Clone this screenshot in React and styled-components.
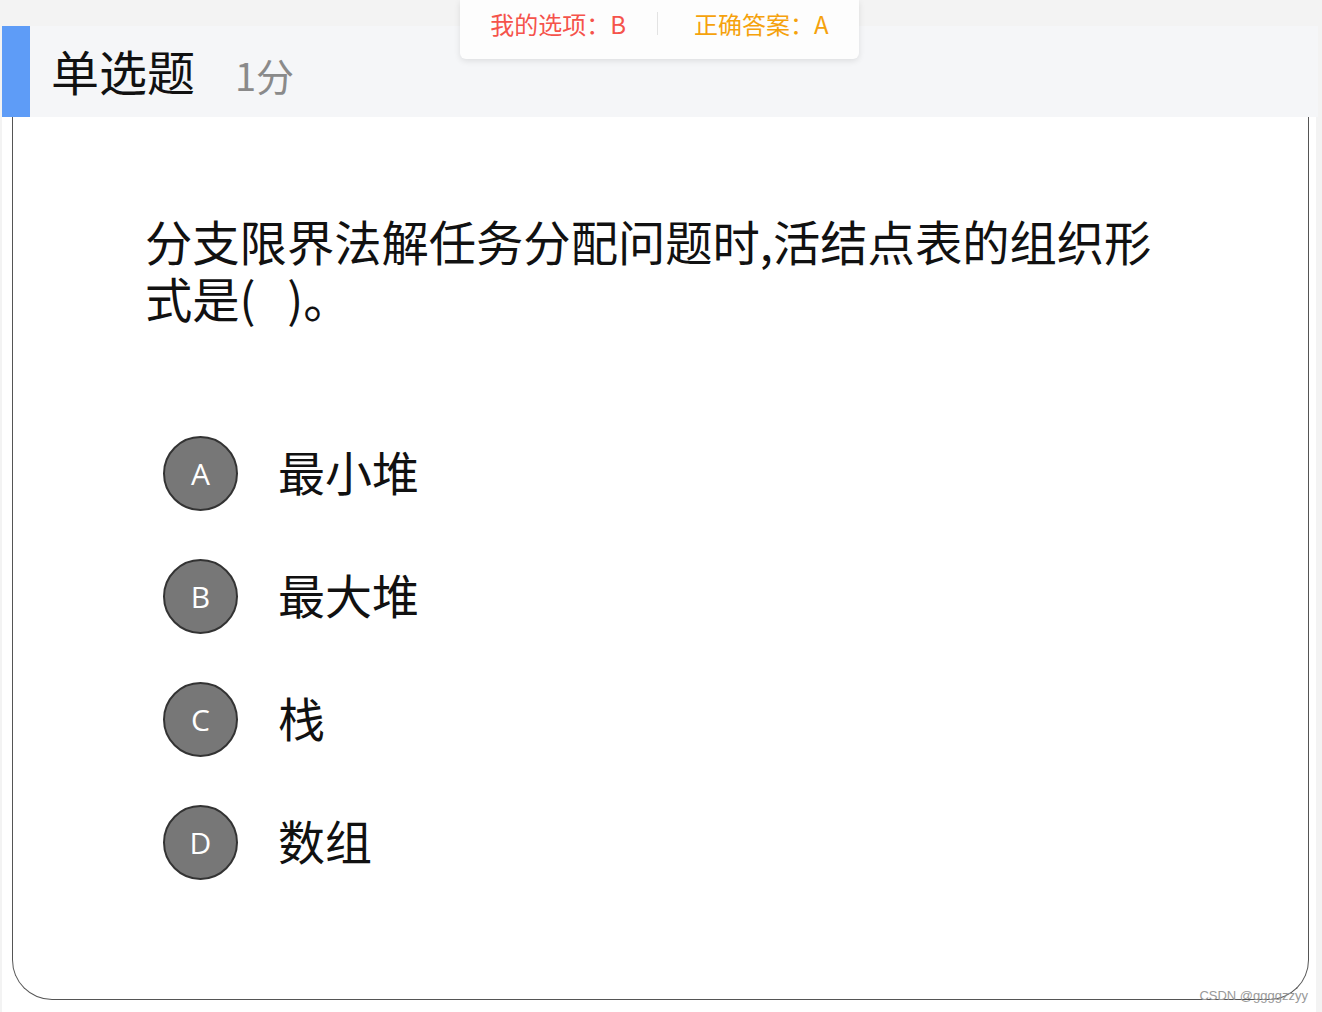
import React from "react";
import styled, { createGlobalStyle } from "styled-components";

const options = [
  { key: "A", text: "最小堆" },
  { key: "B", text: "最大堆" },
  { key: "C", text: "栈" },
  { key: "D", text: "数组" },
];

const App = () => {
  return (
    <>
      <GlobalStyle />
      <Page>
        <Badge>
          <Mine>我的选项：B</Mine>
          <Divider />
          <Right>正确答案：A</Right>
        </Badge>
        <Header>
          <Accent />
          <TitleGroup>
            <Title>单选题</Title>
            <Score>1分</Score>
          </TitleGroup>
        </Header>
        <Body>
          <Card>
            <Question>分支限界法解任务分配问题时,活结点表的组织形式是(&nbsp;&nbsp;&nbsp;)。</Question>
            <OptionList>
              {options.map((o) => (
                <Option key={o.key}>
                  <Circle>{o.key}</Circle>
                  <OptionText>{o.text}</OptionText>
                </Option>
              ))}
            </OptionList>
          </Card>
          <Watermark>CSDN @ggggzzyy</Watermark>
        </Body>
      </Page>
    </>
  );
};
export default App;

const GlobalStyle = createGlobalStyle`
  body {
    margin: 0;
    background: #f3f3f3;
    font-family: "Noto Sans CJK SC", "Noto Sans", sans-serif;
  }
`;
const Page = styled.div`
  position: relative;
  width: 1322px;
  height: 1012px;
  padding: 26px 0 0 2px;
  box-sizing: border-box;
  overflow: hidden;
`;
const Badge = styled.div`
  position: absolute;
  left: 460px;
  top: 0;
  width: 399px;
  height: 59px;
  box-sizing: border-box;
  background: #fdfdfd;
  border-radius: 0 0 6px 6px;
  box-shadow: 0 2px 6px rgba(0, 0, 0, 0.1);
  display: flex;
  align-items: center;
  justify-content: center;
  padding-bottom: 12px;
  z-index: 2;
  font-size: 24px;
`;
const Mine = styled.span`
  color: #f5534b;
`;
const Right = styled.span`
  color: #f5a20c;
`;
const Divider = styled.span`
  width: 1px;
  height: 23px;
  background: #e3e3e3;
  margin: 0 36px 0 31px;
`;
const Header = styled.div`
  width: 1316px;
  height: 91px;
  background: #f5f6f8;
  display: flex;
  align-items: center;
`;
const Accent = styled.div`
  width: 28px;
  align-self: stretch;
  background: #5e9cf7;
`;
const TitleGroup = styled.div`
  display: flex;
  align-items: baseline;
  gap: 40px;
  margin-left: 21px;
  padding-bottom: 4px;
`;
const Title = styled.span`
  font-size: 48px;
  color: #111;
`;
const Score = styled.span`
  font-size: 38px;
  color: #8a8a8a;
`;
const Body = styled.div`
  position: relative;
  width: 1314px;
  height: 895px;
  background: #fff;
`;
const Card = styled.div`
  margin-left: 10px;
  width: 1297px;
  height: 883px;
  box-sizing: border-box;
  border: 1.5px solid #555;
  border-top: none;
  border-radius: 0 0 40px 40px;
  padding: 95px 0 0 132px;
`;
const Question = styled.div`
  max-width: 1030px;
  font-size: 47.3px;
  line-height: 57px;
  color: #111;
`;
const OptionList = styled.div`
  margin: 86px 0 0 18px;
  display: flex;
  flex-direction: column;
`;
const Option = styled.div`
  height: 123px;
  display: flex;
  align-items: center;
  gap: 40px;
`;
const Circle = styled.div`
  width: 71px;
  height: 71px;
  border-radius: 50%;
  border: 2px solid #333;
  background: #777;
  color: #fff;
  display: flex;
  align-items: center;
  justify-content: center;
  font-family: "Open Sans", sans-serif;
  font-size: 30px;
`;
const OptionText = styled.span`
  font-size: 47px;
  color: #111;
  padding-bottom: 6px;
`;
const Watermark = styled.div`
  position: absolute;
  right: 8px;
  bottom: 9px;
  font-family: "Liberation Sans", sans-serif;
  font-size: 13px;
  color: #999;
`;
